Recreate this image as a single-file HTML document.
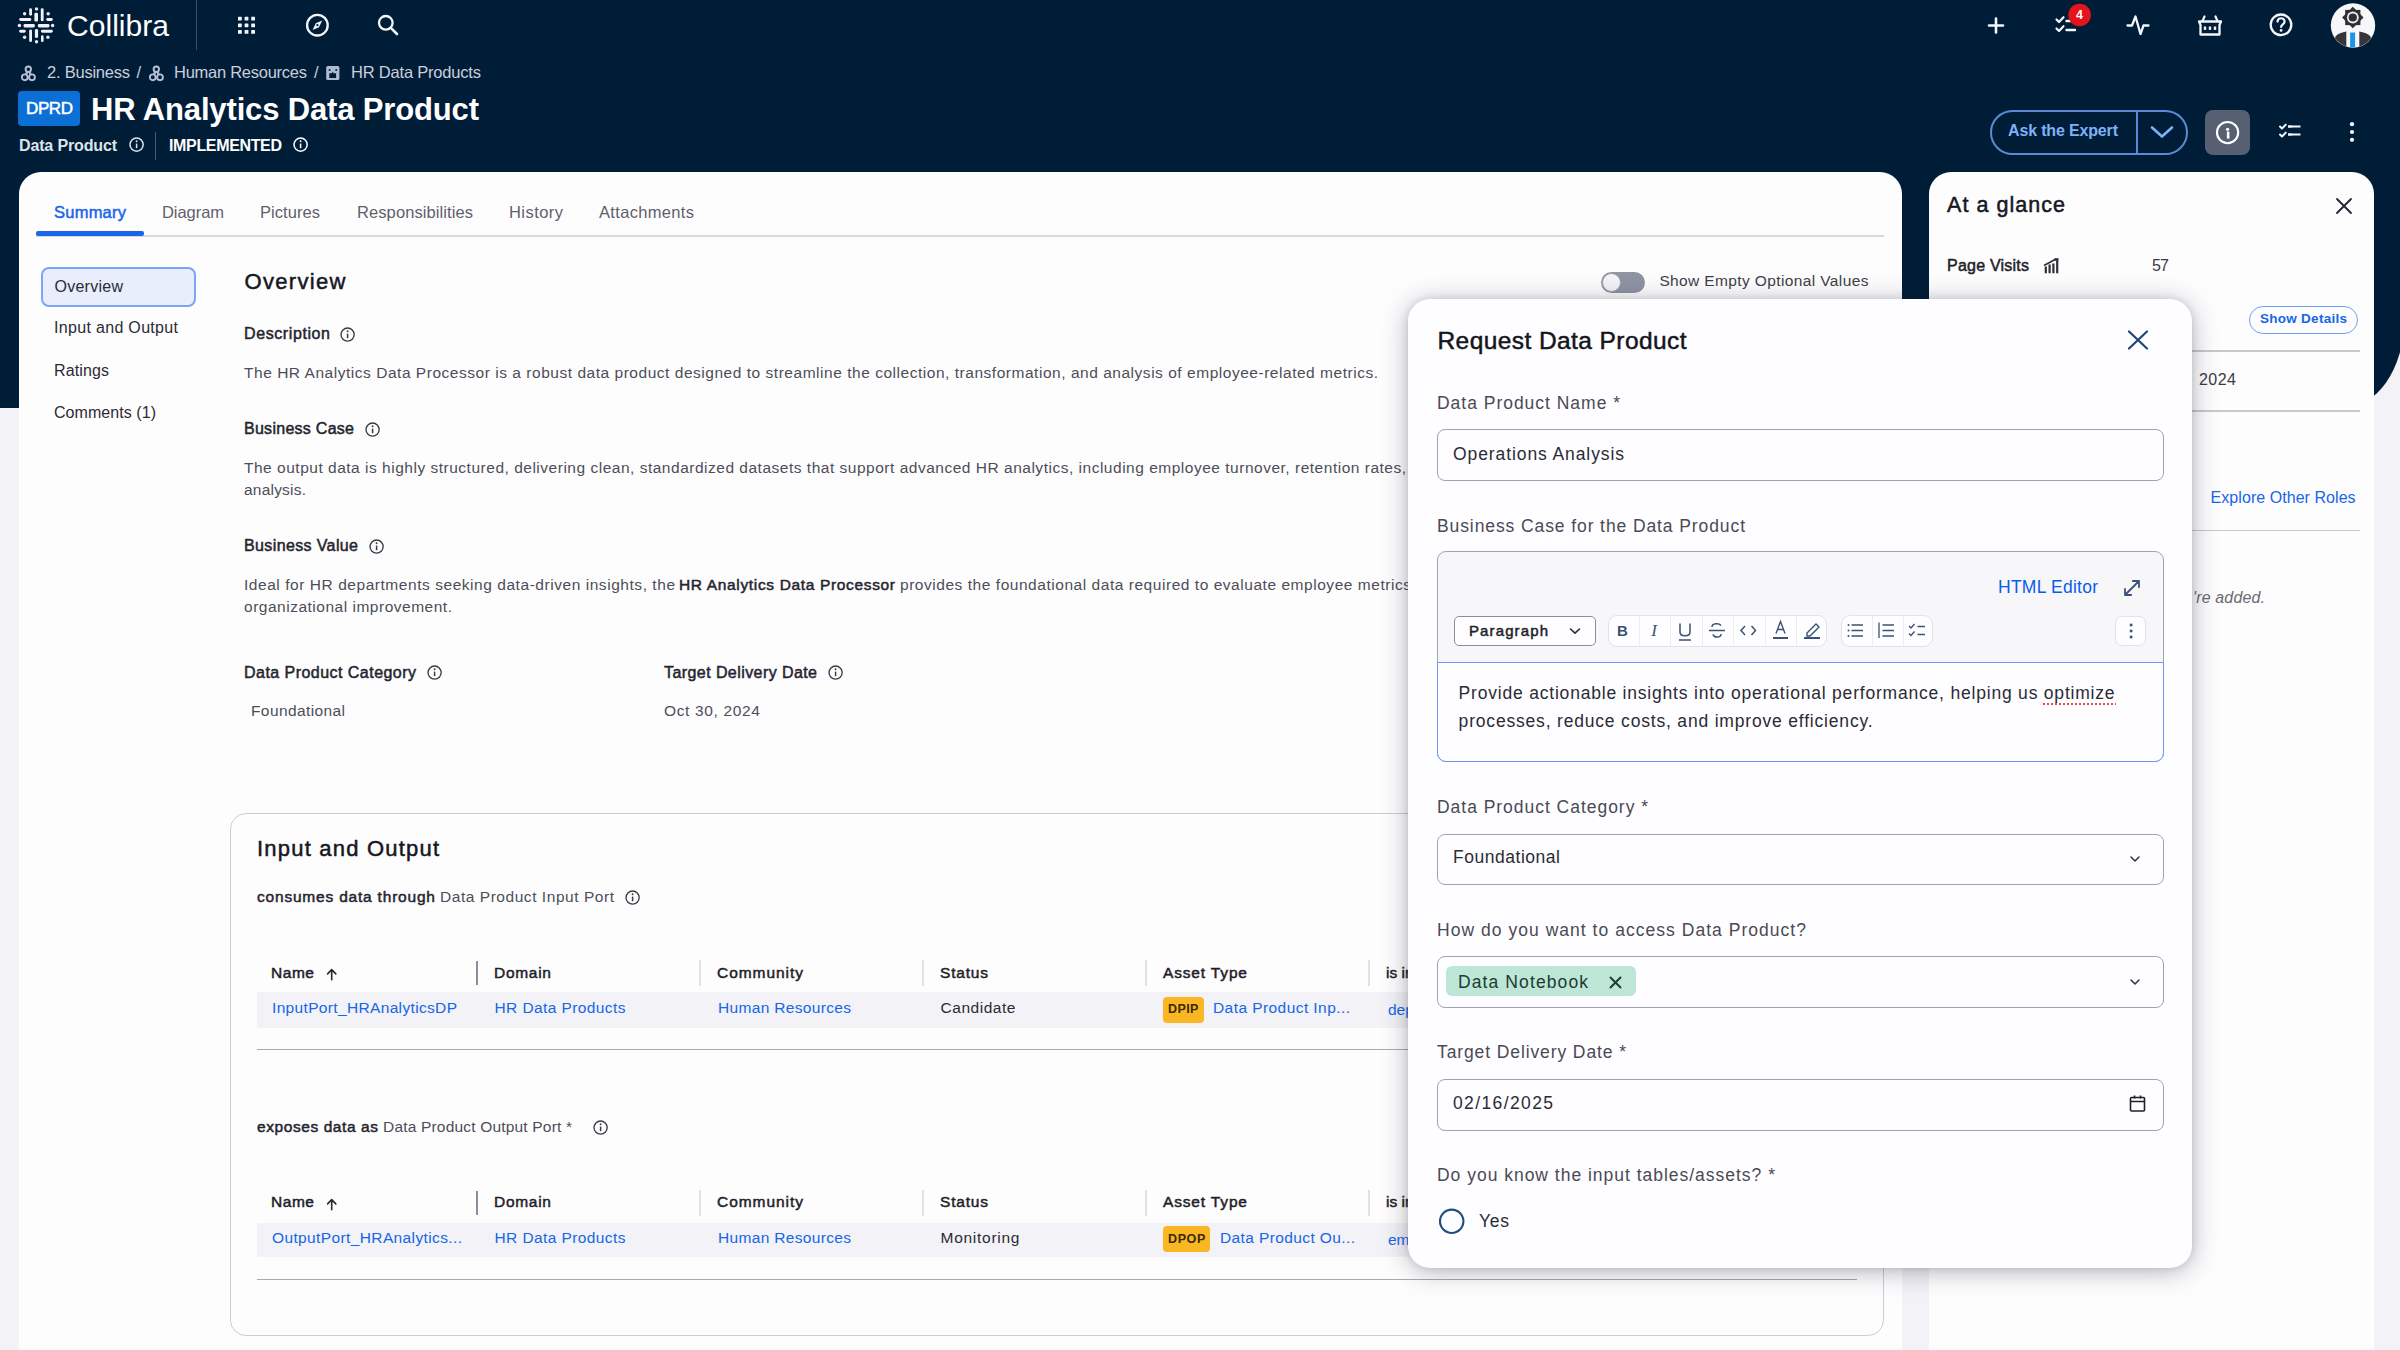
<!DOCTYPE html><html><head><meta charset="utf-8"><title>HR Analytics Data Product</title><style>
*{box-sizing:border-box}
html,body{margin:0;padding:0}
body{width:2400px;height:1350px;overflow:hidden;position:relative;background:#f3f2f7;font-family:"Liberation Sans",sans-serif}
.t{position:absolute;white-space:nowrap;line-height:1}
.a{position:absolute}
svg.a{overflow:visible}
</style></head><body><div class="a" style="left:0px;top:0px;width:2300px;height:408px;background:#001d38"></div>
<div class="a" style="left:2200px;top:0px;width:204px;height:408px;background:#001d38;border-bottom-right-radius:61px 87px"></div>
<svg class="a" style="left:0px;top:0px;" width="60" height="50" viewBox="0 0 60 50"><rect x="29.2" y="8.2" width="2.8" height="7.5" rx="1.4" fill="#f1f3f8"/><rect x="34.4" y="12.8" width="3.6" height="8.8" rx="1.4" fill="#f1f3f8"/><rect x="40.8" y="8.2" width="2.8" height="13.1" rx="1.4" fill="#f1f3f8"/><rect x="29.2" y="29.4" width="2.8" height="12.7" rx="1.4" fill="#f1f3f8"/><rect x="34.9" y="29.1" width="3.2" height="8.8" rx="1.4" fill="#f1f3f8"/><rect x="41.0" y="35.3" width="2.6" height="6.8" rx="1.4" fill="#f1f3f8"/><rect x="19.2" y="18.0" width="12.1" height="3.0" rx="1.4" fill="#f1f3f8"/><rect x="46.3" y="18.0" width="6.5" height="3.0" rx="1.4" fill="#f1f3f8"/><rect x="23.5" y="24.0" width="11.4" height="3.4" rx="1.4" fill="#f1f3f8"/><rect x="37.8" y="24.0" width="11.7" height="3.4" rx="1.4" fill="#f1f3f8"/><rect x="19.2" y="29.7" width="6.5" height="3.0" rx="1.4" fill="#f1f3f8"/><rect x="41.0" y="29.7" width="11.8" height="3.0" rx="1.4" fill="#f1f3f8"/><circle cx="36.5" cy="8.9" r="1.7" fill="#e8ecf4"/><circle cx="24.6" cy="13.8" r="1.7" fill="#e8ecf4"/><circle cx="48.2" cy="13.8" r="1.7" fill="#e8ecf4"/><circle cx="19.4" cy="25.5" r="1.7" fill="#e8ecf4"/><circle cx="52.6" cy="25.5" r="1.7" fill="#e8ecf4"/><circle cx="24.6" cy="37.2" r="1.7" fill="#e8ecf4"/><circle cx="47.9" cy="37.2" r="1.7" fill="#e8ecf4"/><circle cx="36.5" cy="41.8" r="1.7" fill="#e8ecf4"/></svg>
<div class="a" style="left:195.5px;top:0px;width:1.5px;height:50px;background:#3a4c66"></div>
<svg class="a" style="left:0px;top:0px;" width="300" height="50" viewBox="0 0 300 50"><rect x="238.0" y="16.8" width="3.8" height="3.8" rx="0.6" fill="#f4f6fa"/><rect x="238.0" y="23.4" width="3.8" height="3.8" rx="0.6" fill="#f4f6fa"/><rect x="238.0" y="30.0" width="3.8" height="3.8" rx="0.6" fill="#f4f6fa"/><rect x="244.6" y="16.8" width="3.8" height="3.8" rx="0.6" fill="#f4f6fa"/><rect x="244.6" y="23.4" width="3.8" height="3.8" rx="0.6" fill="#f4f6fa"/><rect x="244.6" y="30.0" width="3.8" height="3.8" rx="0.6" fill="#f4f6fa"/><rect x="251.2" y="16.8" width="3.8" height="3.8" rx="0.6" fill="#f4f6fa"/><rect x="251.2" y="23.4" width="3.8" height="3.8" rx="0.6" fill="#f4f6fa"/><rect x="251.2" y="30.0" width="3.8" height="3.8" rx="0.6" fill="#f4f6fa"/></svg>
<svg class="a" style="left:300px;top:8px;" width="36" height="36" viewBox="0 0 36 36"><circle cx="17.4" cy="17.2" r="10.3" fill="none" stroke="#f4f6fa" stroke-width="2.3"/><path d="M22.2 12.4 L19 19.2 L12.6 22 L15.8 15.2 Z" fill="#f4f6fa"/><circle cx="17.4" cy="17.2" r="1.1" fill="#001d38"/></svg>
<svg class="a" style="left:370px;top:8px;" width="36" height="36" viewBox="0 0 36 36"><circle cx="15.8" cy="14.8" r="6.8" fill="none" stroke="#f4f6fa" stroke-width="2.3"/><path d="M20.8 19.8 L27 26" stroke="#f4f6fa" stroke-width="2.6" stroke-linecap="round"/></svg>
<svg class="a" style="left:1980px;top:8px;" width="32" height="36" viewBox="0 0 32 36"><path d="M16 10.5 V24.5 M9 17.5 H23" stroke="#f4f6fa" stroke-width="2.6" stroke-linecap="round"/></svg>
<svg class="a" style="left:2050px;top:8px;" width="40" height="36" viewBox="0 0 40 36"><path d="M6.5 11.5 L9 14 L13.5 9.2 M6.5 20.5 L9 23 L13.5 18.2" fill="none" stroke="#f4f6fa" stroke-width="2.2" stroke-linecap="round" stroke-linejoin="round"/><path d="M16.5 13 H21 M16.5 22 H25" stroke="#f4f6fa" stroke-width="2.4" stroke-linecap="round"/><circle cx="29.6" cy="7" r="11.3" fill="#e3141b"/><text x="29.6" y="11.4" text-anchor="middle" font-family="Liberation Sans" font-weight="700" font-size="12.5" fill="#fff">4</text></svg>
<svg class="a" style="left:2120px;top:8px;" width="36" height="36" viewBox="0 0 36 36"><path d="M7.5 17.5 H12 L15.5 8.5 L20.5 26 L23.5 17.5 H28.5" fill="none" stroke="#f4f6fa" stroke-width="2.3" stroke-linecap="round" stroke-linejoin="round"/></svg>
<svg class="a" style="left:2190px;top:8px;" width="40" height="36" viewBox="0 0 40 36"><path d="M12.5 13 L14.5 8.5 M27.5 13 L25.5 8.5" stroke="#f4f6fa" stroke-width="2.2" stroke-linecap="round"/><path d="M9 13.5 H31 L29.5 17 V26.5 H10.5 V17 Z" fill="none" stroke="#f4f6fa" stroke-width="2.3" stroke-linejoin="round"/><rect x="13.8" y="18.5" width="2.4" height="3.4" fill="#f4f6fa"/><rect x="18.8" y="18.5" width="2.4" height="3.4" fill="#f4f6fa"/><rect x="23.8" y="18.5" width="2.4" height="3.4" fill="#f4f6fa"/></svg>
<svg class="a" style="left:2260px;top:4px;" width="44" height="44" viewBox="0 0 44 44"><circle cx="21" cy="20.8" r="10.3" fill="none" stroke="#f4f6fa" stroke-width="2.3"/><path d="M17.6 17.6 C17.6 13.2 24.6 13.2 24.6 17.4 C24.6 20.2 21.1 20.4 21.1 23" fill="none" stroke="#f4f6fa" stroke-width="2.2" stroke-linecap="round"/><circle cx="21.1" cy="26.4" r="1.4" fill="#f4f6fa"/></svg>
<svg class="a" style="left:2328.5px;top:2px;" width="48" height="48" viewBox="0 0 48 48"><defs><clipPath id="avc"><circle cx="24" cy="23.5" r="22"/></clipPath></defs><circle cx="24" cy="23.5" r="22.2" fill="#f7f6f8"/><g clip-path="url(#avc)"><path d="M4 50 L6 36 C7 32 12 30.5 17.3 29.5 V50 Z M44 50 L42 36 C41 32 36 30.5 30.3 29.5 V50 Z" fill="#37353a"/><rect x="21.1" y="30.5" width="5" height="16" fill="#1b95e6"/><g transform="translate(23.8 15.5)"><rect x="-7.6" y="-7.6" width="15.2" height="15.2" fill="#2f2f33"/><rect x="-7.6" y="-7.6" width="15.2" height="15.2" fill="#2f2f33" transform="rotate(45)"/><circle r="5.9" fill="#ebebef"/><circle r="4.1" fill="#2f2f33"/></g></g></svg>
<svg class="a" style="left:20px;top:62px;" width="18" height="20" viewBox="0 0 18 20"><path d="M8.3 7.5 L4.75 15.3 L12 15.3 Z" fill="none" stroke="#b4bfd2" stroke-width="2.2" stroke-linejoin="round"/><circle cx="8.3" cy="7.2" r="2.7" fill="#001d38" stroke="#b4bfd2" stroke-width="1.9"/><circle cx="4.75" cy="15.3" r="2.9" fill="#001d38" stroke="#b4bfd2" stroke-width="1.9"/><circle cx="12" cy="15.3" r="2.9" fill="#001d38" stroke="#b4bfd2" stroke-width="1.9"/></svg>
<svg class="a" style="left:147.5px;top:62px;" width="18" height="20" viewBox="0 0 18 20"><path d="M8.3 7.5 L4.75 15.3 L12 15.3 Z" fill="none" stroke="#b4bfd2" stroke-width="2.2" stroke-linejoin="round"/><circle cx="8.3" cy="7.2" r="2.7" fill="#001d38" stroke="#b4bfd2" stroke-width="1.9"/><circle cx="4.75" cy="15.3" r="2.9" fill="#001d38" stroke="#b4bfd2" stroke-width="1.9"/><circle cx="12" cy="15.3" r="2.9" fill="#001d38" stroke="#b4bfd2" stroke-width="1.9"/></svg>
<svg class="a" style="left:0px;top:0px;" width="360" height="90" viewBox="0 0 360 90"><rect x="326.2" y="66" width="13.2" height="14" rx="1.6" fill="#aebbd0"/><circle cx="329.6" cy="70.1" r="1" fill="#001d38"/><circle cx="336.2" cy="70.1" r="1" fill="#001d38"/><path d="M329.3 73.2 H331.9 L332.7 71.6 L333.5 73.2 H336.1 V77.9 H329.3 Z" fill="#001d38"/></svg>
<div class="a" style="left:18px;top:91px;width:62px;height:34.5px;background:#0b6fd6;border-radius:4px"></div>
<svg class="a" style="left:128.0px;top:136.4px;" width="17.2" height="17.2" viewBox="0 0 17.2 17.2"><circle cx="8.6" cy="8.6" r="6.6" fill="none" stroke="#dfe3ea" stroke-width="1.5"/><rect x="7.85" y="7.6" width="1.5" height="4.6" fill="#dfe3ea"/><circle cx="8.6" cy="5.3" r="0.95" fill="#dfe3ea"/></svg>
<div class="a" style="left:154.5px;top:132px;width:1.5px;height:28px;background:#4a5b73"></div>
<svg class="a" style="left:291.7px;top:136.4px;" width="17.2" height="17.2" viewBox="0 0 17.2 17.2"><circle cx="8.6" cy="8.6" r="6.6" fill="none" stroke="#ffffff" stroke-width="1.5"/><rect x="7.85" y="7.6" width="1.5" height="4.6" fill="#ffffff"/><circle cx="8.6" cy="5.3" r="0.95" fill="#ffffff"/></svg>
<div class="a" style="left:1989.5px;top:110px;width:198px;height:45px;border:2px solid #5b8ad6;border-radius:23px"></div>
<div class="a" style="left:2136px;top:111px;width:2px;height:43px;background:#5b8ad6"></div>
<svg class="a" style="left:2148px;top:120px;" width="28" height="24" viewBox="0 0 28 24"><path d="M4 7.5 L14 16.5 L24 7.5" fill="none" stroke="#7fb1f7" stroke-width="2.6" stroke-linecap="round" stroke-linejoin="round"/></svg>
<div class="a" style="left:2205px;top:110px;width:45px;height:45px;background:#576073;border-radius:8px"></div>
<svg class="a" style="left:2214.9px;top:119.9px;" width="25.2" height="25.2" viewBox="0 0 25.2 25.2"><circle cx="12.6" cy="12.6" r="10.6" fill="none" stroke="#ffffff" stroke-width="2.1"/><rect x="11.85" y="11.6" width="2.6" height="7" fill="#ffffff"/><circle cx="12.6" cy="9.3" r="1.6" fill="#ffffff"/></svg>
<svg class="a" style="left:2272px;top:116px;" width="36" height="32" viewBox="0 0 36 32"><path d="M8 10.5 L10 12.5 L13.8 8.6 M8 18.5 L10 20.5 L13.8 16.6" fill="none" stroke="#f4f6fa" stroke-width="2" stroke-linecap="round" stroke-linejoin="round"/><path d="M16 10.5 H28.5 M16 18.5 H28.5" stroke="#f4f6fa" stroke-width="2.2"/><path d="M16 10.5 H20 M16 18.5 H20" stroke="#f4f6fa" stroke-width="2.2"/></svg>
<svg class="a" style="left:2340px;top:116px;" width="24" height="32" viewBox="0 0 24 32"><circle cx="12" cy="8.2" r="2.1" fill="#f4f6fa"/><circle cx="12" cy="16" r="2.1" fill="#f4f6fa"/><circle cx="12" cy="23.8" r="2.1" fill="#f4f6fa"/></svg>
<div class="a" style="left:18.5px;top:172px;width:1883.5px;height:1250px;background:#fefdfe;border-radius:22px"></div>
<div class="a" style="left:1928.5px;top:172px;width:445.5px;height:1250px;background:#fefdfe;border-radius:22px"></div>
<div class="a" style="left:36px;top:235px;width:1848px;height:1.5px;background:#d9d9e0"></div>
<div class="a" style="left:36px;top:231px;width:108px;height:5px;background:#1a66ea;border-radius:2px"></div>
<div class="a" style="left:41px;top:267px;width:154.5px;height:39.5px;background:#e8eefc;border:2px solid #7ea4f6;border-radius:8px"></div>
<div class="a" style="left:1600.5px;top:272px;width:44.5px;height:21px;background:#8f94a3;border-radius:11px"></div>
<div class="a" style="left:1601.5px;top:273px;width:19px;height:19px;background:#f4f4f7;border-radius:50%;border:1px solid #9ea2ae"></div>
<svg class="a" style="left:339.4px;top:326.0px;" width="17.2" height="17.2" viewBox="0 0 17.2 17.2"><circle cx="8.6" cy="8.6" r="6.6" fill="none" stroke="#3a3a45" stroke-width="1.35"/><rect x="7.85" y="7.6" width="1.5" height="4.6" fill="#3a3a45"/><circle cx="8.6" cy="5.3" r="0.95" fill="#3a3a45"/></svg>
<svg class="a" style="left:363.9px;top:421.09999999999997px;" width="17.2" height="17.2" viewBox="0 0 17.2 17.2"><circle cx="8.6" cy="8.6" r="6.6" fill="none" stroke="#3a3a45" stroke-width="1.35"/><rect x="7.85" y="7.6" width="1.5" height="4.6" fill="#3a3a45"/><circle cx="8.6" cy="5.3" r="0.95" fill="#3a3a45"/></svg>
<svg class="a" style="left:368.09999999999997px;top:538.4px;" width="17.2" height="17.2" viewBox="0 0 17.2 17.2"><circle cx="8.6" cy="8.6" r="6.6" fill="none" stroke="#3a3a45" stroke-width="1.35"/><rect x="7.85" y="7.6" width="1.5" height="4.6" fill="#3a3a45"/><circle cx="8.6" cy="5.3" r="0.95" fill="#3a3a45"/></svg>
<svg class="a" style="left:426.2px;top:664.4px;" width="17.2" height="17.2" viewBox="0 0 17.2 17.2"><circle cx="8.6" cy="8.6" r="6.6" fill="none" stroke="#3a3a45" stroke-width="1.35"/><rect x="7.85" y="7.6" width="1.5" height="4.6" fill="#3a3a45"/><circle cx="8.6" cy="5.3" r="0.95" fill="#3a3a45"/></svg>
<svg class="a" style="left:826.9px;top:664.4px;" width="17.2" height="17.2" viewBox="0 0 17.2 17.2"><circle cx="8.6" cy="8.6" r="6.6" fill="none" stroke="#3a3a45" stroke-width="1.35"/><rect x="7.85" y="7.6" width="1.5" height="4.6" fill="#3a3a45"/><circle cx="8.6" cy="5.3" r="0.95" fill="#3a3a45"/></svg>
<svg class="a" style="left:623.6999999999999px;top:888.9px;" width="17.2" height="17.2" viewBox="0 0 17.2 17.2"><circle cx="8.6" cy="8.6" r="6.6" fill="none" stroke="#3a3a45" stroke-width="1.35"/><rect x="7.85" y="7.6" width="1.5" height="4.6" fill="#3a3a45"/><circle cx="8.6" cy="5.3" r="0.95" fill="#3a3a45"/></svg>
<svg class="a" style="left:592.1999999999999px;top:1119.2px;" width="17.2" height="17.2" viewBox="0 0 17.2 17.2"><circle cx="8.6" cy="8.6" r="6.6" fill="none" stroke="#3a3a45" stroke-width="1.35"/><rect x="7.85" y="7.6" width="1.5" height="4.6" fill="#3a3a45"/><circle cx="8.6" cy="5.3" r="0.95" fill="#3a3a45"/></svg>
<div class="a" style="left:230px;top:813px;width:1654px;height:523px;border:1.5px solid #cdcdd5;border-radius:16px"></div>
<div class="a" style="left:256.5px;top:991.7px;width:1600px;height:36.299999999999955px;background:#f2f2f7"></div>
<div class="a" style="left:256.5px;top:1048.5px;width:1600px;height:1.5px;background:#a9a9b4"></div>
<div class="a" style="left:475.5px;top:961px;width:2px;height:24px;background:#8e8e9a"></div>
<div class="a" style="left:699px;top:960px;width:1.5px;height:26px;background:#e0e0e6"></div>
<div class="a" style="left:922px;top:960px;width:1.5px;height:26px;background:#e0e0e6"></div>
<div class="a" style="left:1145px;top:960px;width:1.5px;height:26px;background:#e0e0e6"></div>
<div class="a" style="left:1368px;top:960px;width:1.5px;height:26px;background:#e0e0e6"></div>
<svg class="a" style="left:323px;top:967px;" width="18" height="20" viewBox="0 0 18 20"><path d="M8.7 2.8 V12.8 M4.6 6.9 L8.7 2.6 L12.8 6.9" fill="none" stroke="#2a2a34" stroke-width="1.6" stroke-linecap="round" stroke-linejoin="round"/></svg>
<div class="a" style="left:256.5px;top:1223.3px;width:1600px;height:34.200000000000045px;background:#f2f2f7"></div>
<div class="a" style="left:256.5px;top:1278.5px;width:1600px;height:1.5px;background:#a9a9b4"></div>
<div class="a" style="left:475.5px;top:1191px;width:2px;height:24px;background:#8e8e9a"></div>
<div class="a" style="left:699px;top:1190px;width:1.5px;height:26px;background:#e0e0e6"></div>
<div class="a" style="left:922px;top:1190px;width:1.5px;height:26px;background:#e0e0e6"></div>
<div class="a" style="left:1145px;top:1190px;width:1.5px;height:26px;background:#e0e0e6"></div>
<div class="a" style="left:1368px;top:1190px;width:1.5px;height:26px;background:#e0e0e6"></div>
<svg class="a" style="left:323px;top:1197px;" width="18" height="20" viewBox="0 0 18 20"><path d="M8.7 2.8 V12.8 M4.6 6.9 L8.7 2.6 L12.8 6.9" fill="none" stroke="#2a2a34" stroke-width="1.6" stroke-linecap="round" stroke-linejoin="round"/></svg>
<div class="a" style="left:1163px;top:996.5px;width:40.5px;height:26px;background:#fbb624;border-radius:4px"></div>
<div class="a" style="left:1163px;top:1226px;width:47px;height:26px;background:#fbb624;border-radius:4px"></div>
<div class="t" style="left:1168px;top:1003.4px;font-size:12.5px;font-weight:700;color:#3a2a05;letter-spacing:0.4px">DPIP</div>
<div class="t" style="left:1168px;top:1232.6px;font-size:12.5px;font-weight:700;color:#3a2a05;letter-spacing:0.6px">DPOP</div>
<svg class="a" style="left:2330px;top:192px;" width="28" height="28" viewBox="0 0 28 28"><path d="M7 7 L21 21 M21 7 L7 21" stroke="#222230" stroke-width="1.8" stroke-linecap="round"/></svg>
<svg class="a" style="left:2040px;top:255px;" width="24" height="20" viewBox="0 0 24 20"><path d="M5.8 18.2 V11.5 M9.6 18.2 V9.5 M13.4 18.2 V8.6 M17.2 18.2 V5.2" stroke="#2f2f3a" stroke-width="2.2"/><path d="M4 10.5 L15.5 4.2" stroke="#2f2f3a" stroke-width="1.6"/><rect x="14.5" y="3.2" width="4" height="2.6" fill="#2f2f3a"/></svg>
<div class="a" style="left:2248.5px;top:306px;width:109px;height:27.5px;border:1.5px solid #6d9ff6;border-radius:14px"></div>
<div class="a" style="left:1947px;top:350px;width:413px;height:1.5px;background:#c8c8d0"></div>
<div class="a" style="left:1947px;top:410px;width:413px;height:1.5px;background:#c8c8d0"></div>
<div class="a" style="left:1947px;top:529.5px;width:413px;height:1.5px;background:#c8c8d0"></div>
<div class="t" id="t0" style="left:67.00px;top:10.61px;font-size:30px;color:#ffffff;letter-spacing:0.040px;">Collibra</div>
<div class="t" id="t1" style="left:47.00px;top:64.03px;font-size:16.5px;color:#c9cfdb;letter-spacing:-0.230px;">2. Business</div>
<div class="t" id="t2" style="left:136.50px;top:64.03px;font-size:16.5px;color:#c9cfdb;">/</div>
<div class="t" id="t3" style="left:174.00px;top:64.03px;font-size:16.5px;color:#c9cfdb;letter-spacing:-0.260px;">Human Resources</div>
<div class="t" id="t4" style="left:314.00px;top:64.03px;font-size:16.5px;color:#c9cfdb;">/</div>
<div class="t" id="t5" style="left:351.00px;top:64.03px;font-size:16.5px;color:#c9cfdb;letter-spacing:-0.198px;">HR Data Products</div>
<div class="t" id="t6" style="left:26.00px;top:99.61px;font-size:17px;color:#ffffff;-webkit-text-stroke:0.5px #ffffff;letter-spacing:-0.391px;">DPRD</div>
<div class="t" id="t7" style="left:91.00px;top:94.26px;font-size:31px;color:#ffffff;font-weight:700;letter-spacing:-0.150px;">HR Analytics Data Product</div>
<div class="t" id="t8" style="left:19.00px;top:137.96px;font-size:16px;color:#dfe3ea;font-weight:700;letter-spacing:-0.143px;">Data Product</div>
<div class="t" id="t9" style="left:169.00px;top:137.96px;font-size:16px;color:#ffffff;font-weight:700;letter-spacing:-0.345px;">IMPLEMENTED</div>
<div class="t" id="t10" style="left:2008.00px;top:123.46px;font-size:16px;color:#7fb1f7;font-weight:700;letter-spacing:-0.157px;">Ask the Expert</div>
<div class="t" id="t11" style="left:54.00px;top:204.03px;font-size:16.5px;color:#1a66ea;-webkit-text-stroke:0.5px #1a66ea;letter-spacing:0.234px;">Summary</div>
<div class="t" id="t12" style="left:162.00px;top:204.03px;font-size:16.5px;color:#5f5f6b;letter-spacing:-0.060px;">Diagram</div>
<div class="t" id="t13" style="left:260.00px;top:204.03px;font-size:16.5px;color:#5f5f6b;letter-spacing:0.056px;">Pictures</div>
<div class="t" id="t14" style="left:357.00px;top:204.03px;font-size:16.5px;color:#5f5f6b;letter-spacing:0.091px;">Responsibilities</div>
<div class="t" id="t15" style="left:509.00px;top:204.03px;font-size:16.5px;color:#5f5f6b;letter-spacing:0.443px;">History</div>
<div class="t" id="t16" style="left:599.00px;top:204.03px;font-size:16.5px;color:#5f5f6b;letter-spacing:0.328px;">Attachments</div>
<div class="t" id="t17" style="left:54.50px;top:278.76px;font-size:16px;color:#2b2b35;letter-spacing:0.259px;">Overview</div>
<div class="t" id="t18" style="left:54.00px;top:320.46px;font-size:16px;color:#2b2b35;letter-spacing:0.320px;">Input and Output</div>
<div class="t" id="t19" style="left:54.00px;top:362.66px;font-size:16px;color:#2b2b35;letter-spacing:0.125px;">Ratings</div>
<div class="t" id="t20" style="left:54.00px;top:405.46px;font-size:16px;color:#2b2b35;letter-spacing:0.058px;">Comments (1)</div>
<div class="t" id="t21" style="left:244.50px;top:271.38px;font-size:22px;color:#17171f;-webkit-text-stroke:0.5px #17171f;letter-spacing:1.330px;">Overview</div>
<div class="t" id="t22" style="left:1659.40px;top:273.38px;font-size:15.5px;color:#3f3f4a;letter-spacing:0.376px;">Show Empty Optional Values</div>
<div class="t" id="t23" style="left:244.00px;top:326.46px;font-size:16px;color:#25252f;-webkit-text-stroke:0.5px #25252f;letter-spacing:0.597px;">Description</div>
<div class="t" id="t24" style="left:244.00px;top:364.88px;font-size:15.5px;color:#4d4d59;letter-spacing:0.529px;">The HR Analytics Data Processor is a robust data product designed to streamline the collection, transformation, and analysis of employee-related metrics.</div>
<div class="t" id="t25" style="left:244.00px;top:421.46px;font-size:16px;color:#25252f;-webkit-text-stroke:0.5px #25252f;letter-spacing:0.273px;">Business Case</div>
<div class="t" id="t26" style="left:244.00px;top:459.88px;font-size:15.5px;color:#4d4d59;letter-spacing:0.511px;">The output data is highly structured, delivering clean, standardized datasets that support advanced HR analytics, including employee turnover, retention rates,</div>
<div class="t" id="t27" style="left:1412.00px;top:459.88px;font-size:15.5px;color:#4d4d59;">and performance</div>
<div class="t" id="t28" style="left:244.00px;top:482.18px;font-size:15.5px;color:#4d4d59;letter-spacing:0.211px;">analysis.</div>
<div class="t" id="t29" style="left:244.00px;top:538.46px;font-size:16px;color:#25252f;-webkit-text-stroke:0.5px #25252f;letter-spacing:0.376px;">Business Value</div>
<div class="t" id="t30" style="left:244.00px;top:576.88px;font-size:15.5px;color:#4d4d59;letter-spacing:0.548px;">Ideal for HR departments seeking data-driven insights, the</div>
<div class="t" id="t31" style="left:679.00px;top:576.88px;font-size:15.5px;color:#25252f;-webkit-text-stroke:0.5px #25252f;letter-spacing:0.654px;">HR Analytics Data Processor</div>
<div class="t" id="t32" style="left:900.00px;top:576.88px;font-size:15.5px;color:#4d4d59;letter-spacing:0.541px;">provides the foundational data required to evaluate employee metrics</div>
<div class="t" id="t33" style="left:1418.00px;top:576.88px;font-size:15.5px;color:#4d4d59;">and drive</div>
<div class="t" id="t34" style="left:244.00px;top:599.38px;font-size:15.5px;color:#4d4d59;letter-spacing:0.511px;">organizational improvement.</div>
<div class="t" id="t35" style="left:244.00px;top:665.46px;font-size:16px;color:#25252f;-webkit-text-stroke:0.5px #25252f;letter-spacing:0.463px;">Data Product Category</div>
<div class="t" id="t36" style="left:664.00px;top:665.46px;font-size:16px;color:#25252f;-webkit-text-stroke:0.5px #25252f;letter-spacing:0.424px;">Target Delivery Date</div>
<div class="t" id="t37" style="left:251.00px;top:702.88px;font-size:15.5px;color:#4d4d59;letter-spacing:0.398px;">Foundational</div>
<div class="t" id="t38" style="left:664.00px;top:702.88px;font-size:15.5px;color:#4d4d59;letter-spacing:0.658px;">Oct 30, 2024</div>
<div class="t" id="t39" style="left:257.00px;top:838.38px;font-size:22px;color:#17171f;-webkit-text-stroke:0.5px #17171f;letter-spacing:1.206px;">Input and Output</div>
<div class="t" id="t40" style="left:257.00px;top:889.38px;font-size:15.5px;color:#25252f;-webkit-text-stroke:0.5px #25252f;letter-spacing:0.800px;">consumes data through</div>
<div class="t" id="t41" style="left:440.00px;top:889.38px;font-size:15.5px;color:#4d4d59;letter-spacing:0.546px;">Data Product Input Port</div>
<div class="t" id="t42" style="left:257.00px;top:1118.88px;font-size:15.5px;color:#25252f;-webkit-text-stroke:0.5px #25252f;letter-spacing:0.579px;">exposes data as</div>
<div class="t" id="t43" style="left:383.00px;top:1118.88px;font-size:15.5px;color:#4d4d59;letter-spacing:0.185px;">Data Product Output Port *</div>
<div class="t" id="t44" style="left:271.00px;top:964.88px;font-size:15.5px;color:#1f1f29;-webkit-text-stroke:0.5px #1f1f29;letter-spacing:0.547px;">Name</div>
<div class="t" id="t45" style="left:494.00px;top:964.88px;font-size:15.5px;color:#1f1f29;-webkit-text-stroke:0.5px #1f1f29;letter-spacing:0.716px;">Domain</div>
<div class="t" id="t46" style="left:717.00px;top:964.88px;font-size:15.5px;color:#1f1f29;-webkit-text-stroke:0.5px #1f1f29;letter-spacing:0.951px;">Community</div>
<div class="t" id="t47" style="left:940.00px;top:964.88px;font-size:15.5px;color:#1f1f29;-webkit-text-stroke:0.5px #1f1f29;letter-spacing:0.809px;">Status</div>
<div class="t" id="t48" style="left:1163.00px;top:964.88px;font-size:15.5px;color:#1f1f29;-webkit-text-stroke:0.5px #1f1f29;letter-spacing:0.844px;">Asset Type</div>
<div class="t" id="t49" style="left:1386.00px;top:964.88px;font-size:15.5px;color:#1f1f29;-webkit-text-stroke:0.5px #1f1f29;">is input of</div>
<div class="t" id="t50" style="left:272.00px;top:1000.38px;font-size:15.5px;color:#1666e6;letter-spacing:0.342px;">InputPort_HRAnalyticsDP</div>
<div class="t" id="t51" style="left:494.50px;top:1000.38px;font-size:15.5px;color:#1666e6;letter-spacing:0.405px;">HR Data Products</div>
<div class="t" id="t52" style="left:718.00px;top:1000.38px;font-size:15.5px;color:#1666e6;letter-spacing:0.331px;">Human Resources</div>
<div class="t" id="t53" style="left:940.50px;top:1000.38px;font-size:15.5px;color:#2b2b35;letter-spacing:0.541px;">Candidate</div>
<div class="t" id="t54" style="left:1213.00px;top:1000.38px;font-size:15.5px;color:#1666e6;letter-spacing:0.431px;">Data Product Inp...</div>
<div class="t" id="t55" style="left:1388.00px;top:1002.38px;font-size:15.5px;color:#1666e6;">dependency</div>
<div class="t" id="t56" style="left:271.00px;top:1194.38px;font-size:15.5px;color:#1f1f29;-webkit-text-stroke:0.5px #1f1f29;letter-spacing:0.547px;">Name</div>
<div class="t" id="t57" style="left:494.00px;top:1194.38px;font-size:15.5px;color:#1f1f29;-webkit-text-stroke:0.5px #1f1f29;letter-spacing:0.716px;">Domain</div>
<div class="t" id="t58" style="left:717.00px;top:1194.38px;font-size:15.5px;color:#1f1f29;-webkit-text-stroke:0.5px #1f1f29;letter-spacing:0.951px;">Community</div>
<div class="t" id="t59" style="left:940.00px;top:1194.38px;font-size:15.5px;color:#1f1f29;-webkit-text-stroke:0.5px #1f1f29;letter-spacing:0.809px;">Status</div>
<div class="t" id="t60" style="left:1163.00px;top:1194.38px;font-size:15.5px;color:#1f1f29;-webkit-text-stroke:0.5px #1f1f29;letter-spacing:0.844px;">Asset Type</div>
<div class="t" id="t61" style="left:1386.00px;top:1194.38px;font-size:15.5px;color:#1f1f29;-webkit-text-stroke:0.5px #1f1f29;">is input of</div>
<div class="t" id="t62" style="left:272.00px;top:1230.18px;font-size:15.5px;color:#1666e6;letter-spacing:0.378px;">OutputPort_HRAnalytics...</div>
<div class="t" id="t63" style="left:494.50px;top:1230.18px;font-size:15.5px;color:#1666e6;letter-spacing:0.405px;">HR Data Products</div>
<div class="t" id="t64" style="left:718.00px;top:1230.18px;font-size:15.5px;color:#1666e6;letter-spacing:0.331px;">Human Resources</div>
<div class="t" id="t65" style="left:940.50px;top:1230.18px;font-size:15.5px;color:#2b2b35;letter-spacing:0.736px;">Monitoring</div>
<div class="t" id="t66" style="left:1220.00px;top:1230.18px;font-size:15.5px;color:#1666e6;letter-spacing:0.390px;">Data Product Ou...</div>
<div class="t" id="t67" style="left:1388.00px;top:1232.18px;font-size:15.5px;color:#1666e6;">employee</div>
<div class="t" id="t68" style="left:1947.00px;top:194.60px;font-size:21.5px;color:#17171f;-webkit-text-stroke:0.5px #17171f;letter-spacing:1.042px;">At a glance</div>
<div class="t" id="t69" style="left:1947.00px;top:258.46px;font-size:16px;color:#1f1f29;-webkit-text-stroke:0.5px #1f1f29;letter-spacing:0.225px;">Page Visits</div>
<div class="t" id="t70" style="left:2152.00px;top:258.46px;font-size:16px;color:#3a3a45;letter-spacing:-0.797px;">57</div>
<div class="t" id="t71" style="left:2260.00px;top:311.57px;font-size:13.5px;color:#1666e6;font-weight:700;letter-spacing:0.270px;">Show Details</div>
<div class="t" id="t72" style="left:2199.00px;top:371.86px;font-size:16px;color:#3a3a45;letter-spacing:0.469px;">2024</div>
<div class="t" id="t73" style="left:2210.60px;top:489.66px;font-size:16px;color:#1666e6;letter-spacing:0.052px;">Explore Other Roles</div>
<div class="t" id="t74" style="left:1960.00px;top:590.16px;font-size:16px;color:#6a6a75;font-style:italic;letter-spacing:0.428px;">Members will appear once the</div>
<div class="t" id="t75" style="left:2193.00px;top:590.16px;font-size:16px;color:#6a6a75;font-style:italic;letter-spacing:0.148px;">'re added.</div>
<div class="a" style="left:1408px;top:299px;width:784px;height:968.5px;background:#fefdff;border-radius:22px;box-shadow:0 3px 26px rgba(25,25,45,0.34), 0 0 6px rgba(25,25,45,0.10)"></div>
<svg class="a" style="left:2124px;top:326px;" width="28" height="28" viewBox="0 0 28 28"><path d="M5 5.5 L23 22.5 M23 5.5 L5 22.5" stroke="#1d4577" stroke-width="2.2" stroke-linecap="round"/></svg>
<div class="a" style="left:1436.5px;top:428.7px;width:727.5px;height:52.6px;border:1.5px solid #a3a3ad;border-radius:8px;background:#fefdff"></div>
<div class="a" style="left:1436.5px;top:550.8px;width:727.5px;height:211px;border:1.5px solid #a3a3ad;border-radius:9px;background:#f7f7fa;overflow:hidden"></div>
<div class="a" style="left:1436.5px;top:662px;width:727.5px;height:99.8px;border:1.5px solid #6c96f2;border-radius:0 0 9px 9px;background:#fefdff"></div>
<svg class="a" style="left:2118px;top:574px;" width="28" height="28" viewBox="0 0 28 28"><path d="M7 21 L21 7 M14.8 7 H21 V13.2 M7 14.8 V21 H13.2" fill="none" stroke="#3a5273" stroke-width="1.8" stroke-linecap="round" stroke-linejoin="round"/></svg>
<div class="a" style="left:1454px;top:615.6px;width:142px;height:30.8px;border:1.3px solid #8e8e99;border-radius:5px;background:#fefdff"></div>
<svg class="a" style="left:1565px;top:622px;" width="20" height="18" viewBox="0 0 20 18"><path d="M5.5 7 L10 11.2 L14.5 7" fill="none" stroke="#2a2a34" stroke-width="1.6" stroke-linecap="round" stroke-linejoin="round"/></svg>
<div class="a" style="left:1607.5px;top:615px;width:219.5px;height:31.5px;border:1.3px solid #e2e2e9;border-radius:9px;background:#fefdff"></div>
<div class="a" style="left:1638.9px;top:616px;width:1px;height:29.5px;background:#ececf1"></div>
<div class="a" style="left:1670.3px;top:616px;width:1px;height:29.5px;background:#ececf1"></div>
<div class="a" style="left:1701.7px;top:616px;width:1px;height:29.5px;background:#ececf1"></div>
<div class="a" style="left:1733.1px;top:616px;width:1px;height:29.5px;background:#ececf1"></div>
<div class="a" style="left:1764.5px;top:616px;width:1px;height:29.5px;background:#ececf1"></div>
<div class="a" style="left:1795.9px;top:616px;width:1px;height:29.5px;background:#ececf1"></div>
<div class="a" style="left:1840.5px;top:615px;width:92.5px;height:31.5px;border:1.3px solid #e2e2e9;border-radius:9px;background:#fefdff"></div>
<div class="a" style="left:1871.5px;top:616px;width:1px;height:29.5px;background:#ececf1"></div>
<div class="a" style="left:1902.5px;top:616px;width:1px;height:29.5px;background:#ececf1"></div>
<div class="a" style="left:2115px;top:615.7px;width:31px;height:30.5px;border:1.3px solid #e2e2e9;border-radius:7px;background:#fefdff"></div>
<svg class="a" style="left:0;top:0" width="2400" height="1350"><text x="1622.5" y="636" text-anchor="middle" font-family="Liberation Sans" font-weight="700" font-size="15" fill="#3a5273">B</text><text x="1654" y="636" text-anchor="middle" font-family="Liberation Serif" font-style="italic" font-size="17" fill="#3a5273">I</text><path d="M1680 623.5 V632 C1680 637 1690 637 1690 632 V623.5 M1679 640 H1691" fill="none" stroke="#3a5273" stroke-width="1.5"/><path d="M1709 630.5 H1725 M1721 625.5 C1719 623 1712 623 1712 627 M1713 634.5 C1714 638 1721 638 1721 634" fill="none" stroke="#3a5273" stroke-width="1.5"/><path d="M1745 626 L1741 630.5 L1745 635 M1751.5 626 L1755.5 630.5 L1751.5 635" fill="none" stroke="#3a5273" stroke-width="1.5"/><path d="M1776 633.5 L1780.5 621.5 L1785 633.5 M1777.5 629.5 H1783.5" fill="none" stroke="#3a5273" stroke-width="1.4"/><rect x="1773" y="637" width="15" height="2" fill="#3a5273"/><path d="M1807 633 L1816 624 L1819 627 L1810 636 H1807 Z" fill="none" stroke="#3a5273" stroke-width="1.4"/><rect x="1804" y="637" width="16" height="2" fill="#3a5273"/><circle cx="1848.5" cy="625" r="1" fill="#3a5273"/><path d="M1851.5 625 H1863" stroke="#3a5273" stroke-width="1.5"/><circle cx="1848.5" cy="630.5" r="1" fill="#3a5273"/><path d="M1851.5 630.5 H1863" stroke="#3a5273" stroke-width="1.5"/><circle cx="1848.5" cy="636" r="1" fill="#3a5273"/><path d="M1851.5 636 H1863" stroke="#3a5273" stroke-width="1.5"/><path d="M1879 622.5 V638" stroke="#3a5273" stroke-width="1.3"/><path d="M1882.5 625 H1894" stroke="#3a5273" stroke-width="1.5"/><path d="M1882.5 630.5 H1894" stroke="#3a5273" stroke-width="1.5"/><path d="M1882.5 636 H1894" stroke="#3a5273" stroke-width="1.5"/><path d="M1909 626 L1911 628 L1914.5 624 M1909 633.5 L1911 635.5 L1914.5 631.5" fill="none" stroke="#3a5273" stroke-width="1.4"/><path d="M1917.5 626.5 H1925 M1917.5 634.5 H1925" stroke="#3a5273" stroke-width="1.6"/><rect x="2129.8" y="623.7" width="2.6" height="2.6" fill="#3a5273"/><rect x="2129.8" y="629.7" width="2.6" height="2.6" fill="#3a5273"/><rect x="2129.8" y="635.7" width="2.6" height="2.6" fill="#3a5273"/></svg>
<div class="a" style="left:2043px;top:703px;width:73px;height:2px;background-image:linear-gradient(90deg,#e05050 50%,transparent 50%);background-size:4px 2px"></div>
<div class="a" style="left:1436.5px;top:833.5px;width:727.5px;height:51px;border:1.5px solid #a3a3ad;border-radius:8px;background:#fefdff"></div>
<svg class="a" style="left:2125px;top:849px;" width="20" height="20" viewBox="0 0 20 20"><path d="M6 8 L10 12 L14 8" fill="none" stroke="#2a3a55" stroke-width="1.6" stroke-linecap="round" stroke-linejoin="round"/></svg>
<div class="a" style="left:1436.5px;top:955.7px;width:727.5px;height:52.3px;border:1.5px solid #a3a3ad;border-radius:8px;background:#fefdff"></div>
<svg class="a" style="left:2125px;top:971.5px;" width="20" height="20" viewBox="0 0 20 20"><path d="M6 8 L10 12 L14 8" fill="none" stroke="#2a3a55" stroke-width="1.6" stroke-linecap="round" stroke-linejoin="round"/></svg>
<div class="a" style="left:1446px;top:966.2px;width:190px;height:30px;background:#bde6d6;border-radius:6px"></div>
<svg class="a" style="left:1605px;top:971.5px;" width="22" height="22" viewBox="0 0 22 22"><path d="M5.5 5.5 L15.5 15.5 M15.5 5.5 L5.5 15.5" stroke="#1e3a32" stroke-width="1.9" stroke-linecap="round"/></svg>
<div class="a" style="left:1436.5px;top:1078.7px;width:727.5px;height:52px;border:1.5px solid #a3a3ad;border-radius:8px;background:#fefdff"></div>
<svg class="a" style="left:2126px;top:1092px;" width="24" height="24" viewBox="0 0 24 24"><rect x="4.5" y="5.5" width="14" height="13.5" rx="1" fill="none" stroke="#1f1f29" stroke-width="1.6"/><path d="M4.5 9.5 H18.5 M8.5 3.5 V6.5 M14.5 3.5 V6.5" stroke="#1f1f29" stroke-width="1.6"/></svg>
<svg class="a" style="left:1436px;top:1206px;" width="32" height="32" viewBox="0 0 32 32"><circle cx="15.7" cy="15.3" r="11.7" fill="none" stroke="#1f4e7f" stroke-width="2.1"/></svg>
<div class="t" id="t76" style="left:1437.50px;top:329.26px;font-size:24.5px;color:#15151d;-webkit-text-stroke:0.5px #15151d;letter-spacing:0.418px;">Request Data Product</div>
<div class="t" id="t77" style="left:1437.00px;top:395.19px;font-size:17.5px;color:#4a4a55;letter-spacing:0.980px;">Data Product Name *</div>
<div class="t" id="t78" style="left:1453.00px;top:445.99px;font-size:17.5px;color:#2b2b35;letter-spacing:0.907px;">Operations Analysis</div>
<div class="t" id="t79" style="left:1437.00px;top:518.19px;font-size:17.5px;color:#4a4a55;letter-spacing:0.903px;">Business Case for the Data Product</div>
<div class="t" id="t80" style="left:1998.00px;top:579.19px;font-size:17.5px;color:#0b5ce8;letter-spacing:0.242px;">HTML Editor</div>
<div class="t" id="t81" style="left:1469.00px;top:622.80px;font-size:15px;color:#1f1f29;-webkit-text-stroke:0.5px #1f1f29;letter-spacing:1.117px;">Paragraph</div>
<div class="t" id="t82" style="left:1458.60px;top:684.99px;font-size:17.5px;color:#2b2b35;letter-spacing:0.798px;">Provide actionable insights into operational performance, helping us optimize</div>
<div class="t" id="t83" style="left:1458.60px;top:713.09px;font-size:17.5px;color:#2b2b35;letter-spacing:0.813px;">processes, reduce costs, and improve efficiency.</div>
<div class="t" id="t84" style="left:1437.00px;top:799.19px;font-size:17.5px;color:#4a4a55;letter-spacing:0.969px;">Data Product Category *</div>
<div class="t" id="t85" style="left:1453.00px;top:849.39px;font-size:17.5px;color:#2b2b35;letter-spacing:0.527px;">Foundational</div>
<div class="t" id="t86" style="left:1437.00px;top:922.19px;font-size:17.5px;color:#4a4a55;letter-spacing:1.032px;">How do you want to access Data Product?</div>
<div class="t" id="t87" style="left:1458.00px;top:973.59px;font-size:17.5px;color:#203a33;letter-spacing:1.104px;">Data Notebook</div>
<div class="t" id="t88" style="left:1437.00px;top:1044.19px;font-size:17.5px;color:#4a4a55;letter-spacing:0.894px;">Target Delivery Date *</div>
<div class="t" id="t89" style="left:1453.00px;top:1094.89px;font-size:17.5px;color:#2b2b35;letter-spacing:1.378px;">02/16/2025</div>
<div class="t" id="t90" style="left:1437.00px;top:1167.19px;font-size:17.5px;color:#4a4a55;letter-spacing:0.984px;">Do you know the input tables/assets? *</div>
<div class="t" id="t91" style="left:1479.00px;top:1212.69px;font-size:17.5px;color:#2b2b35;letter-spacing:0.719px;">Yes</div></body></html>
